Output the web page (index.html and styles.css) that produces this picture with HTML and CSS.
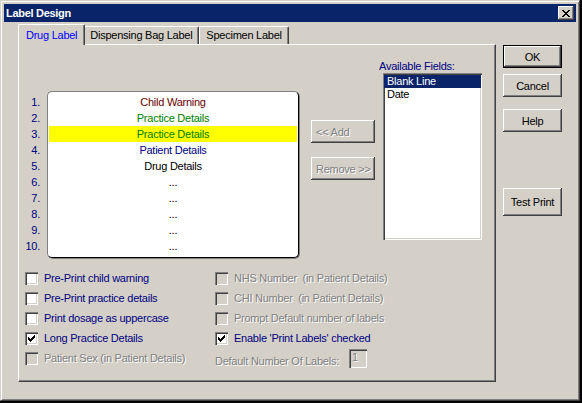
FILE: index.html
```html
<!DOCTYPE html>
<html lang="en">
<head>
<meta charset="UTF-8">
<title>Label Design</title>
<link rel="stylesheet" href="styles.css">
</head>
<body>
    <div class="window">
        <div class="titlebar">
            <span class="title">Label Design</span>
            <button class="close-btn" type="button">
                <svg width="8" height="7" viewBox="0 0 8 7" shape-rendering="crispEdges">
                    <path fill="#000" d="M0 0h2v1H0z M6 0h2v1H6z M1 1h2v1H1z M5 1h2v1H5z M2 2h4v1H2z M3 3h2v1H3z M2 4h4v1H2z M1 5h2v1H1z M5 5h2v1H5z M0 6h2v1H0z M6 6h2v1H6z"/>
                </svg>
            </button>
        </div>

        <div class="client">
            <div class="tabbed">
                <div class="tabs">
                    <div class="tab tab-active">Drug Label</div>
                    <div class="tab">Dispensing Bag Label</div>
                    <div class="tab">Specimen Label</div>
                </div>

                <div class="panel">
                    <div class="editor">
                        <div class="slots">
                            <div class="slot-numbers">
                                <div>1.</div><div>2.</div><div>3.</div><div>4.</div><div>5.</div>
                                <div>6.</div><div>7.</div><div>8.</div><div>9.</div><div>10.</div>
                            </div>
                            <div class="slot-list">
                                <div class="slot slot-warning">Child Warning</div>
                                <div class="slot slot-practice">Practice Details</div>
                                <div class="slot slot-practice slot-current">Practice Details</div>
                                <div class="slot slot-patient">Patient Details</div>
                                <div class="slot">Drug Details</div>
                                <div class="slot">...</div>
                                <div class="slot">...</div>
                                <div class="slot">...</div>
                                <div class="slot">...</div>
                                <div class="slot">...</div>
                            </div>
                        </div>

                        <div class="shift-buttons">
                            <button class="btn btn-shift" type="button" disabled>&lt;&lt; Add</button>
                            <button class="btn btn-shift" type="button" disabled>Remove &gt;&gt;</button>
                        </div>

                        <div class="fields">
                            <div class="fields-label">Available Fields:</div>
                            <div class="fields-list">
                                <div class="field field-selected">Blank Line</div>
                                <div class="field">Date</div>
                            </div>
                        </div>
                    </div>

                    <div class="options">
                        <label class="check"><span class="box"></span><span class="check-text">Pre-Print child warning</span></label>
                        <label class="check"><span class="box"></span><span class="check-text">Pre-Print practice details</span></label>
                        <label class="check"><span class="box"></span><span class="check-text">Print dosage as uppercase</span></label>
                        <label class="check"><span class="box box-checked"></span><span class="check-text">Long Practice Details</span></label>
                        <label class="check check-disabled"><span class="box"></span><span class="check-text">Patient Sex (in Patient Details)</span></label>

                        <label class="check check-disabled"><span class="box"></span><span class="check-text">NHS Number&nbsp; (in Patient Details)</span></label>
                        <label class="check check-disabled"><span class="box"></span><span class="check-text">CHI Number&nbsp; (in Patient Details)</span></label>
                        <label class="check check-disabled"><span class="box"></span><span class="check-text">Prompt Default number of labels</span></label>
                        <label class="check"><span class="box box-checked"></span><span class="check-text">Enable 'Print Labels' checked</span></label>
                        <div class="count-row">
                            <span class="count-label">Default Number Of Labels:</span>
                            <span class="count-input">1</span>
                        </div>
                    </div>
                </div>
            </div>

            <div class="actions">
                <button class="btn btn-default" type="button">OK</button>
                <button class="btn btn-cancel" type="button">Cancel</button>
                <button class="btn btn-help" type="button">Help</button>
                <button class="btn btn-print" type="button">Test Print</button>
            </div>
        </div>
    </div>
</body>
</html>
```

FILE: styles.css
```css
body {
    margin: 0;
    background: #000;
    font-family: "Liberation Sans", Arial, sans-serif;
    font-size: 11px;
    letter-spacing: -0.25px;
    color: #000;
}

.window {
    width: 580px;
    height: 401px;
    box-sizing: border-box;
    padding: 3px;
    background: #d4d0c8;
    border: 1px solid;
    border-color: #d4d0c8 #404040 #404040 #d4d0c8;
    box-shadow: inset 1px 1px #fff, inset -1px -1px #808080;
}

/* title bar */
.titlebar {
    height: 18px;
    padding: 0 2px;
    display: flex;
    align-items: center;
    justify-content: space-between;
    background: #0a246a;
}

.title {
    color: #fff;
    font-weight: bold;
    letter-spacing: -0.3px;
}

.close-btn {
    width: 16px;
    height: 14px;
    padding: 0;
    border: none;
    display: flex;
    align-items: center;
    justify-content: center;
    background: #d4d0c8;
    box-shadow: inset -1px -1px #404040, inset 1px 1px #fff, inset -2px -2px #808080;
}

.client {
    display: flex;
    padding-left: 14px;
}

/* tabs */
.tabbed {
    width: 478px;
    display: flex;
    flex-direction: column;
}

.tabs {
    height: 20px;
    margin-top: 2px;
    padding-left: 2px;
    display: flex;
    align-items: flex-end;
}

.tab {
    height: 18px;
    box-sizing: border-box;
    padding: 0 6px;
    line-height: 17px;
    white-space: nowrap;
    background: #d4d0c8;
    border-top: 1px solid #fff;
    border-left: 1px solid #fff;
    border-right: 1px solid #404040;
    border-radius: 2px 2px 0 0;
    box-shadow: inset -1px 0 #808080;
}

.tab-active {
    position: relative;
    z-index: 1;
    height: 21px;
    margin: 0 -2px -1px;
    padding: 0 7px;
    line-height: 20px;
    color: #0000ff;
}

.panel {
    height: 338px;
    box-sizing: border-box;
    padding-top: 15px;
    border: 1px solid;
    border-color: #fff #404040 #404040 #fff;
    box-shadow: inset -1px -1px #808080;
}

/* label slots and available fields */
.editor {
    display: flex;
    align-items: flex-start;
}

.slots {
    display: flex;
    margin-top: 31px;
}

.slot-numbers {
    width: 21px;
    padding-top: 3px;
    text-align: right;
    color: #000080;
    line-height: 16px;
}

.slot-list {
    width: 252px;
    height: 167px;
    box-sizing: border-box;
    margin-left: 7px;
    padding: 2px 1px;
    background: #fff;
    border: 1px solid;
    border-color: #808080 #000 #000 #808080;
    border-radius: 5px;
    box-shadow: 1px 1px #808080;
}

.slot {
    height: 16px;
    line-height: 16px;
    text-align: center;
}

.slot-warning {
    color: #6b0000;
}

.slot-practice {
    color: #008000;
}

.slot-patient {
    color: #000080;
}

.slot-current {
    background: #ffff00;
}

.shift-buttons {
    margin: 60px 0 0 12px;
    display: flex;
    flex-direction: column;
    gap: 14px;
}

.fields {
    margin-left: 4px;
}

.fields-label {
    line-height: 13px;
    color: #000080;
}

.fields-list {
    width: 99px;
    height: 167px;
    box-sizing: border-box;
    margin-left: 4px;
    padding: 2px 1px;
    background: #fff;
    box-shadow: inset 1px 1px #808080, inset 2px 2px #404040, inset -1px -1px #fff, inset -2px -2px #d4d0c8;
}

.field {
    height: 13px;
    line-height: 13px;
    padding-left: 3px;
}

.field-selected {
    background: #0a246a;
    color: #fff;
}

/* buttons */
.btn {
    width: 59px;
    height: 23px;
    padding: 0;
    box-sizing: border-box;
    font-family: inherit;
    font-size: 11px;
    letter-spacing: inherit;
    color: #000;
    background: #d4d0c8;
    border: none;
    box-shadow: inset -1px -1px #404040, inset 1px 1px #fff, inset -2px -2px #808080;
}

.btn-shift {
    width: 64px;
    padding-left: 5px;
    text-align: left;
}

.btn:disabled {
    color: #808080;
    text-shadow: 1px 1px #fff;
}

.btn-default {
    border: 1px solid #000;
}

.actions {
    margin-left: 7px;
    padding-top: 23px;
    display: flex;
    flex-direction: column;
}

.btn-cancel {
    margin-top: 6px;
}

.btn-help {
    margin-top: 12px;
}

.btn-print {
    height: 28px;
    margin-top: 56px;
}

/* check boxes */
.options {
    margin-top: 10px;
    padding-left: 6px;
    display: grid;
    grid-template-columns: 190px auto;
    grid-template-rows: repeat(5, 20px);
    grid-auto-flow: column;
}

.check {
    display: flex;
    align-items: center;
    color: #000080;
    white-space: nowrap;
}

.box {
    width: 13px;
    height: 13px;
    box-sizing: border-box;
    flex-shrink: 0;
    background: #fff;
    box-shadow: inset 1px 1px #808080, inset 2px 2px #404040, inset -1px -1px #fff, inset -2px -2px #d4d0c8;
}

.box-checked {
    background: #fff url("data:image/svg+xml,%3Csvg xmlns='http://www.w3.org/2000/svg' width='13' height='13' shape-rendering='crispEdges'%3E%3Cpath d='M3 5h1v3H3z M4 6h1v3H4z M5 7h1v3H5z M6 6h1v3H6z M7 5h1v3H7z M8 4h1v3H8z M9 3h1v3H9z'/%3E%3C/svg%3E") no-repeat;
}

.check-text {
    margin-left: 6px;
}

.check-disabled {
    color: #808080;
    text-shadow: 1px 1px #fff;
}

.check-disabled .box {
    background-color: #d4d0c8;
}

.count-row {
    display: flex;
    align-items: flex-end;
    color: #808080;
    text-shadow: 1px 1px #fff;
}

.count-label {
    line-height: 13px;
}

.count-input {
    width: 18px;
    height: 19px;
    box-sizing: border-box;
    margin-left: 10px;
    padding: 2px 0 0 3px;
    line-height: 13px;
    background: #d4d0c8;
    box-shadow: inset 1px 1px #808080, inset 2px 2px #404040, inset -1px -1px #fff, inset -2px -2px #d4d0c8;
}
```
